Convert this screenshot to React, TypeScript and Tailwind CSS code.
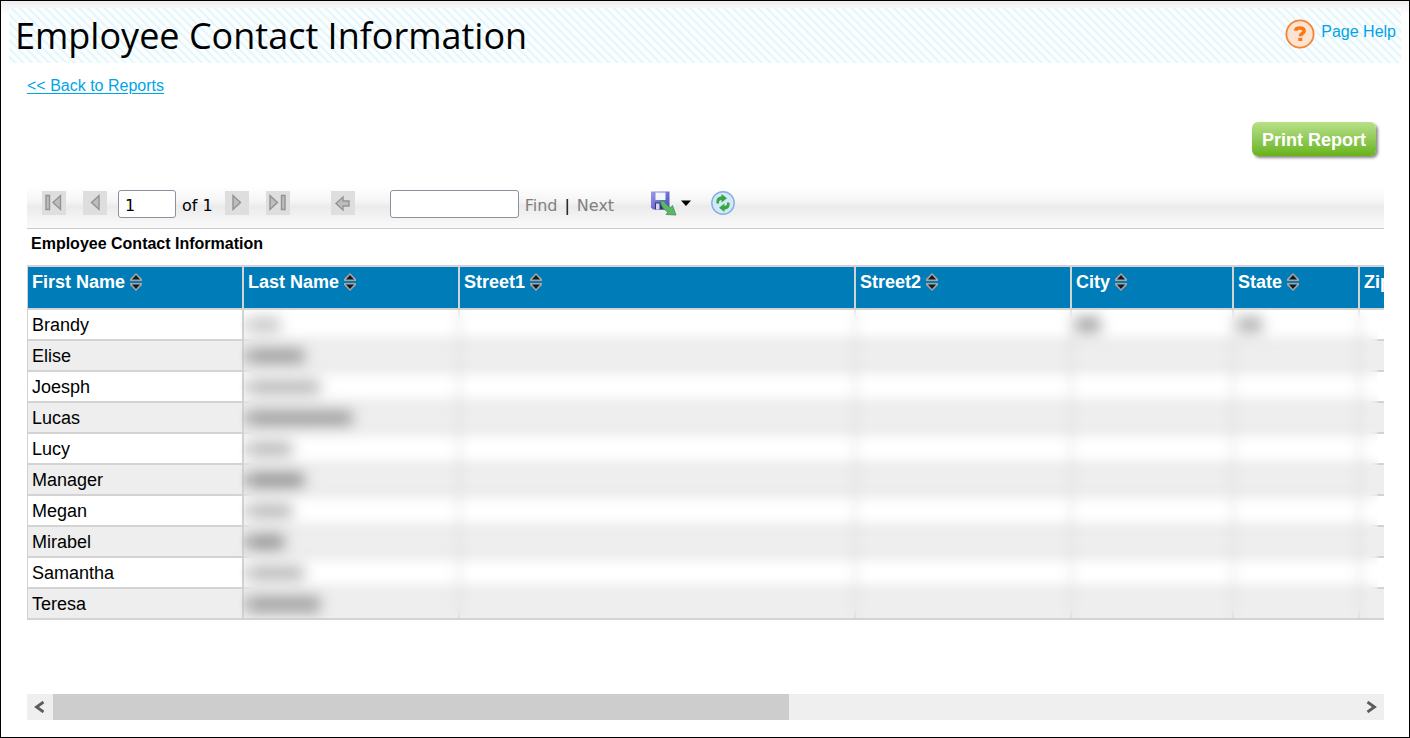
import type { ReactNode } from 'react';

interface Column {
  label: string;
  width: string;
}

interface Employee {
  firstName: string;
  /** Class for the redacted bar that stands in for the last name. */
  lastName: string;
  hasAddress?: boolean;
}

const COLUMNS: Column[] = [
  { label: 'First Name', width: 'w-[216px]' },
  { label: 'Last Name', width: 'w-[216px]' },
  { label: 'Street1', width: 'w-[396px]' },
  { label: 'Street2', width: 'w-[216px]' },
  { label: 'City', width: 'w-[162px]' },
  { label: 'State', width: 'w-[126px]' },
  { label: 'Zip', width: 'w-[126px]' },
];

const EMPLOYEES: Employee[] = [
  { firstName: 'Brandy', lastName: 'w-8 bg-[#bbb]', hasAddress: true },
  { firstName: 'Elise', lastName: 'w-14 bg-[#8c8c8c]' },
  { firstName: 'Joesph', lastName: 'w-[72px] bg-[#aaa]' },
  { firstName: 'Lucas', lastName: 'w-26 bg-[#8c8c8c]' },
  { firstName: 'Lucy', lastName: 'w-11 bg-[#aaa]' },
  { firstName: 'Manager', lastName: 'w-14 bg-[#808080]' },
  { firstName: 'Megan', lastName: 'w-11 bg-[#aaa]' },
  { firstName: 'Mirabel', lastName: 'w-9 bg-[#808080]' },
  { firstName: 'Samantha', lastName: 'w-14 bg-[#aaa]' },
  { firstName: 'Teresa', lastName: 'w-[72px] bg-[#8c8c8c]' },
];

const CELL = 'border-2 border-[#d3d3d3] px-1 text-left';

function SortIcon(): React.JSX.Element {
  return (
    <svg width="12" height="18" viewBox="0 0 12 18" aria-hidden="true">
      <path d="M6 0 12 6v2H0V6z" fill="#a5a3a3" />
      <path d="M6 2 10 6.500H2z" fill="#16191c" />
      <path d="M6 18 12 12v-2H0v2z" fill="#a5a3a3" />
      <path d="M6 16 10 11.500H2z" fill="#16191c" />
    </svg>
  );
}

function ToolButton({ label, children }: { label: string; children: ReactNode }): React.JSX.Element {
  return (
    <button type="button" aria-label={label} className="size-6 shrink-0 bg-[#dedede]">
      <svg width="24" height="24" viewBox="0 0 24 24" fill="#bdbdbd" stroke="#929292" strokeWidth="1.400">
        {children}
      </svg>
    </button>
  );
}

function HelpIcon(): React.JSX.Element {
  return (
    <svg width="30" height="30" viewBox="0 0 30 30" fill="none" aria-hidden="true">
      <circle cx="15" cy="15" r="13.600" fill="#fce3d2" stroke="#f58434" strokeWidth="1.800" />
      <path d="M10.500 11.800c.2-1.900 1.900-2.800 4.400-2.800 2.800 0 4.200 1.200 4.200 2.900 0 2.700-3.700 2.600-3.700 5.400" stroke="#f97a14" strokeWidth="3.600" />
      <rect x="13.300" y="18.800" width="4" height="3.200" fill="#f97a14" />
    </svg>
  );
}

function SaveIcon(): React.JSX.Element {
  return (
    <svg width="26" height="25" viewBox="0 0 26 25" aria-hidden="true">
      <defs>
        <linearGradient id="disk" x1="0" y1="0" x2="1" y2="1">
          <stop offset="0" stopColor="#9a9bea" />
          <stop offset="1" stopColor="#4547b4" />
        </linearGradient>
      </defs>
      <path d="M0 .5h18.500v18H2l-2-2z" fill="url(#disk)" />
      <path d="M4.500 1.500h10V9h-10z" fill="#f2f5fd" />
      <path d="M4 11.500h10v7H4z" fill="#33357c" />
      <path d="M5 12.500h3.500v6H5z" fill="#d4d6ee" />
      <path d="M9.500 10.500 13 10c1.500 3 3 4.500 6.500 6.500l2-2L25 24l-10-.5 2-2.500c-4-2-7-6-7.500-10.500z" fill="#5db56c" stroke="#3a9450" strokeWidth=".8" />
    </svg>
  );
}

function RefreshIcon(): React.JSX.Element {
  return (
    <svg width="24" height="24" viewBox="0 0 24 24" aria-hidden="true">
      <circle cx="12" cy="12" r="11.200" fill="#d3e8fb" stroke="#86aede" strokeWidth="1.400" />
      <path d="M5.500 12.500C4.800 8 7 5.500 10.500 5.500V3l5.500 4.300-5.500 4.200V9c-2 0-2.800 1.200-2.400 3.500z" fill="#37a83f" />
      <path d="M18.500 11.500c.7 4.500-1.500 7-5 7V21L8 16.700l5.500-4.200V15c2 0 2.800-1.200 2.400-3.500z" fill="#37a83f" />
    </svg>
  );
}

function PageHeader(): React.JSX.Element {
  return (
    <header className="bg-linear-to-b from-[#efeff0] to-white to-[14px] px-2 pt-[7px]">
      <div className="flex h-[55px] items-center justify-between bg-[repeating-linear-gradient(45deg,#fbfeff_0px,#fbfeff_3px,#e4f6fb_4px,#e4f6fb_5px,#fbfeff_6px)] pr-[5px] pl-1.5">
        <h1 className="font-['Open_Sans',sans-serif] text-[36px] leading-[54px]">Employee Contact Information</h1>
        <a href="#help" className="flex items-center gap-1.5 pb-1 text-base text-[#00a4e8]">
          <HelpIcon />
          <span className="pb-1">Page Help</span>
        </a>
      </div>
    </header>
  );
}

function ReportToolbar(): React.JSX.Element {
  return (
    <div className="flex h-[43px] items-center border-b border-[#ccc] bg-[linear-gradient(#ffffff,#f6f6f6_14px,#f2f2f2_17px,#ebebeb_20px,#fafafa)] pb-2 pl-[15px] font-['DejaVu_Sans',sans-serif] text-base">
      <div className="flex items-center gap-[17px]">
        <ToolButton label="First page">
          <path d="M4 4.500h3.500v14H4zM18.500 4.500v14l-7.500-7z" />
        </ToolButton>
        <ToolButton label="Previous page">
          <path d="M16 4.500v14l-7.500-7z" />
        </ToolButton>
      </div>
      <input aria-label="Current page" defaultValue="1" className="mt-0.5 ml-[11px] h-7 w-[58px] rounded-[3px] border border-[#8f8f9d] bg-white px-1.5 pt-0.5" />
      <span className="ml-1.5 pt-1.5">of 1</span>
      <div className="ml-3 flex items-center gap-[17px]">
        <ToolButton label="Next page">
          <path d="M8 4.500v14l7.500-7z" />
        </ToolButton>
        <ToolButton label="Last page">
          <path d="M4 4.500v14l7.500-7zM15.500 4.500H19v14h-3.500z" />
        </ToolButton>
      </div>
      <div className="ml-[41px] flex">
        <ToolButton label="Back to parent report">
          <path d="M5 12.500 12 6v4h6v5h-6v4z" />
        </ToolButton>
      </div>
      <input aria-label="Find text" className="mt-0.5 ml-[35px] h-7 w-[129px] rounded-[3px] border border-[#8f8f9d] bg-white px-1.5" />
      <div className="ml-1.5 flex gap-[7px] pt-1.5">
        <button type="button" className="text-[#808080]">Find</button>
        <span>|</span>
        <button type="button" className="text-[#808080]">Next</button>
      </div>
      <button type="button" aria-label="Export" className="ml-[37px] flex items-center gap-1">
        <SaveIcon />
        <svg width="10" height="6" viewBox="0 0 10 6" aria-hidden="true">
          <path d="M0 .5h10L5 6z" fill="#000" />
        </svg>
      </button>
      <button type="button" aria-label="Refresh" className="ml-5">
        <RefreshIcon />
      </button>
    </div>
  );
}

function ReportTable(): React.JSX.Element {
  return (
    <div className="relative overflow-hidden">
      <table className="-ml-px w-[1459px] table-fixed border-collapse text-lg leading-6">
        <thead>
          <tr className="h-[43px] bg-[#007db8] text-white">
            {COLUMNS.map((column) => (
              <th key={column.label} scope="col" className={`${CELL} ${column.width} pt-[3px] align-top font-bold`}>
                <button type="button" className="flex items-center gap-[5px]">
                  {column.label}
                  <SortIcon />
                </button>
              </th>
            ))}
          </tr>
        </thead>
        <tbody>
          {EMPLOYEES.map((employee) => (
            <tr key={employee.firstName} className="h-[31px] odd:bg-white even:bg-[#eee]">
              <td className={CELL}>{employee.firstName}</td>
              <td className={CELL}>
                <div className={`h-3 blur-[5px] ${employee.lastName}`} />
              </td>
              <td className={CELL} />
              <td className={CELL} />
              <td className={CELL}>{employee.hasAddress && <div className="h-3 w-6 bg-[#888] blur-[5px]" />}</td>
              <td className={CELL}>{employee.hasAddress && <div className="h-3 w-6 bg-[#999] blur-[5px]" />}</td>
              <td className={CELL} />
            </tr>
          ))}
        </tbody>
      </table>
      {/* Hides personal details behind frosted glass */}
      <div className="absolute top-[45px] right-1.5 bottom-0.5 left-[217px] backdrop-blur-[6px]" />
    </div>
  );
}

function ScrollBar(): React.JSX.Element {
  return (
    <div className="flex h-[26px] bg-[#efefef]">
      <button type="button" aria-label="Scroll left" className="flex w-[26px] items-center justify-start pl-[7px]">
        <svg width="11" height="12" viewBox="0 0 11 12" aria-hidden="true">
          <path d="M9.500 1 2.500 6l7 5" fill="none" stroke="#5c5c5c" strokeWidth="2.800" />
        </svg>
      </button>
      <div className="flex-1">
        <div className="h-full w-[56.4%] bg-[#cdcdcd]" />
      </div>
      <button type="button" aria-label="Scroll right" className="flex w-[26px] items-center justify-end pr-[7px]">
        <svg width="11" height="12" viewBox="0 0 11 12" aria-hidden="true">
          <path d="M1.500 1 8.500 6l-7 5" fill="none" stroke="#5c5c5c" strokeWidth="2.800" />
        </svg>
      </button>
    </div>
  );
}

export default function App(): React.JSX.Element {
  return (
    <div className="min-h-screen border border-black bg-white font-['Liberation_Sans',Arial,sans-serif] text-black">
      <PageHeader />
      <main className="flex flex-col pt-[11px] pr-[25px] pb-4 pl-[26px]">
        <a href="#reports" className="self-start text-base text-[#00a4e8] underline underline-offset-2">
          &lt;&lt; Back to Reports
        </a>
        <button
          type="button"
          className="mt-6 mr-2 h-[34px] self-end rounded-md bg-linear-to-b from-[#b9e088] to-[#68b30e] px-2.5 pt-0.5 text-lg font-bold text-white shadow-[2px_2px_3px_#888]"
        >
          Print Report
        </button>
        <div className="mt-[30px]">
          <ReportToolbar />
          <h2 className="px-1 pt-[3px] pb-[9px] text-base font-bold">Employee Contact Information</h2>
          <ReportTable />
        </div>
        <div className="mt-[74px]">
          <ScrollBar />
        </div>
      </main>
    </div>
  );
}
